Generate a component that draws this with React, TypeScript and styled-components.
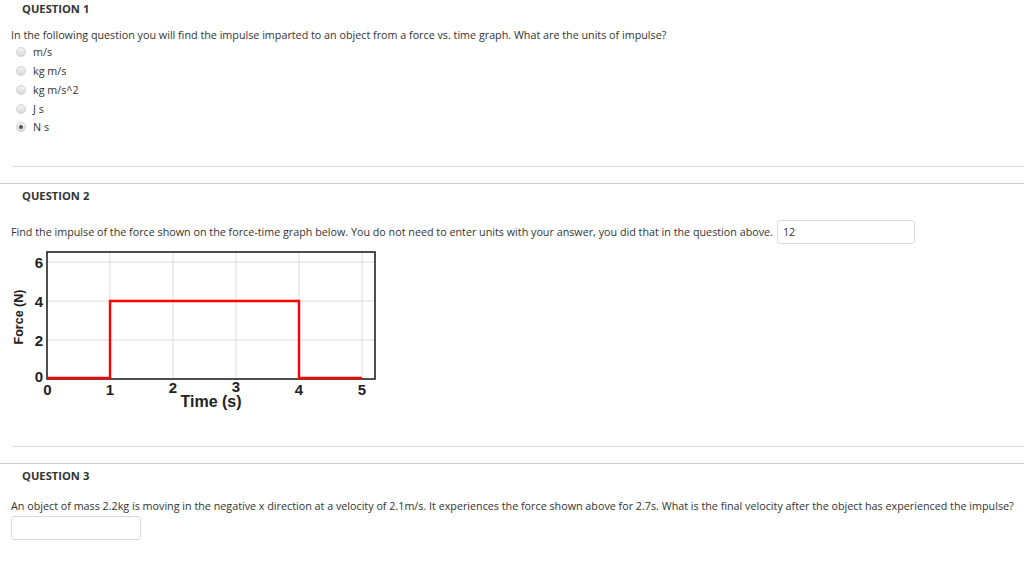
import React from "react";
import styled, { createGlobalStyle } from "styled-components";

const GlobalStyle = createGlobalStyle`
  html, body {
    margin: 0;
    padding: 0;
    background: #fff;
  }
  body {
    font-family: "Open Sans", "Liberation Sans", sans-serif;
    color: #333;
  }
`;

const options = ["m/s", "kg m/s", "kg m/s^2", "J s", "N s"];
const selected = 4;

export default function App() {
  return (
    <>
      <GlobalStyle />
      <Page>
        <Question>
          <Heading>QUESTION 1</Heading>
          <Body>
            <Prompt>
              In the following question you will find the impulse imparted to an object from a
              force vs. time graph. What are the units of impulse?
            </Prompt>
            <OptionList>
              {options.map((o, i) => (
                <OptionRow key={o}>
                  <Radio $checked={i === selected} />
                  <OptionLabel>{o}</OptionLabel>
                </OptionRow>
              ))}
            </OptionList>
            <Divider $gap={29} />
          </Body>
        </Question>

        <Question $separated>
          <Heading>QUESTION 2</Heading>
          <Body>
            <AnswerRow>
              <Prompt>
                Find the impulse of the force shown on the force-time graph below. You do not need
                to enter units with your answer, you did that in the question above.
              </Prompt>
              <Field $width={138} defaultValue="12" />
            </AnswerRow>
            <ForceGraph />
            <Divider $gap={29} />
          </Body>
        </Question>

        <Question $separated>
          <Heading>QUESTION 3</Heading>
          <Body>
            <Prompt $top={13}>
              An object of mass 2.2kg is moving in the negative x direction at a velocity of 2.1m/s.
              It experiences the force shown above for 2.7s. What is the final velocity after the
              object has experienced the impulse?
            </Prompt>
            <Field $width={130} $top={2} />
          </Body>
        </Question>
      </Page>
    </>
  );
}

function ForceGraph() {
  const xs = [47, 110, 173, 236, 299, 362];
  const ys = [379, 340, 301, 262];
  return (
    <Graph viewBox="11 245 380 172" width={380} height={172}>
      <rect x={11} y={245} width={380} height={172} fill="#fff" />
      {xs.slice(1).map((x) => (
        <line key={x} x1={x} y1={252} x2={x} y2={379} stroke="#dcdcdc" strokeWidth={1} />
      ))}
      {ys.slice(1).map((y) => (
        <line key={y} x1={47} y1={y} x2={375} y2={y} stroke="#dcdcdc" strokeWidth={1} />
      ))}
      <rect x={47} y={252} width={328} height={127} fill="none" stroke="#222" strokeWidth={1.6} />
      <polyline
        points="47,378 110,378 110,301 299,301 299,378 362,378"
        fill="none"
        stroke="#f00"
        strokeWidth={2.4}
      />
      <g fontFamily="'Liberation Sans', Arial, sans-serif" fontWeight="bold" fill="#222">
        <text x={39} y={262} fontSize={15} textAnchor="middle" dominantBaseline="central">6</text>
        <text x={39} y={301} fontSize={15} textAnchor="middle" dominantBaseline="central">4</text>
        <text x={39} y={340} fontSize={15} textAnchor="middle" dominantBaseline="central">2</text>
        <text x={39} y={376} fontSize={15} textAnchor="middle" dominantBaseline="central">0</text>
        <text x={47.5} y={389} fontSize={15} textAnchor="middle" dominantBaseline="central">0</text>
        <text x={110} y={389} fontSize={15} textAnchor="middle" dominantBaseline="central">1</text>
        <text x={173} y={387} fontSize={15} textAnchor="middle" dominantBaseline="central">2</text>
        <text x={236} y={386} fontSize={15} textAnchor="middle" dominantBaseline="central">3</text>
        <text x={299} y={389} fontSize={15} textAnchor="middle" dominantBaseline="central">4</text>
        <text x={362} y={389} fontSize={15} textAnchor="middle" dominantBaseline="central">5</text>
        <text x={211} y={401} fontSize={16} textAnchor="middle" dominantBaseline="central">
          Time (s)
        </text>
        <text
          x={19}
          y={317}
          fontSize={12.5}
          textAnchor="middle"
          dominantBaseline="central"
          transform="rotate(-90 19 317)"
        >
          Force (N)
        </text>
      </g>
    </Graph>
  );
}

const Page = styled.div`
  width: 1024px;
  min-height: 563px;
`;

const Question = styled.section<{ $separated?: boolean }>`
  border-top: ${(p) => (p.$separated ? "1px solid #cfcfcf" : "none")};
  margin-top: ${(p) => (p.$separated ? "16px" : "0")};
  padding-top: ${(p) => (p.$separated ? "3px" : "0")};
`;

const Heading = styled.h3`
  margin: 0;
  padding-left: 22px;
  font-size: 11.2px;
  line-height: 18px;
  font-weight: 700;
  color: #333;
`;

const Body = styled.div`
  padding-left: 11px;
`;

const Prompt = styled.p<{ $top?: number }>`
  margin: ${(p) => p.$top ?? 9}px 0 0;
  font-size: 10.75px;
  line-height: 16px;
  color: #333;
  white-space: nowrap;
`;

const OptionList = styled.div`
  display: flex;
  flex-direction: column;
`;

const OptionRow = styled.label`
  display: flex;
  align-items: center;
  height: 18.75px;
  padding-left: 5px;
`;

const Radio = styled.span<{ $checked?: boolean }>`
  position: relative;
  width: 10px;
  height: 10px;
  border-radius: 50%;
  box-sizing: border-box;
  border: 1px solid #d2d2d2;
  background: linear-gradient(#f4f4f4, #d9d9d9);
  margin-right: 7px;

  &::after {
    content: "";
    display: ${(p) => (p.$checked ? "block" : "none")};
    position: absolute;
    left: 2px;
    top: 2px;
    width: 4px;
    height: 4px;
    border-radius: 50%;
    background: #555;
  }
`;

const OptionLabel = styled.span`
  font-size: 10.75px;
  color: #333;
`;

const Divider = styled.hr<{ $gap: number }>`
  margin: ${(p) => p.$gap}px 0 0;
  border: none;
  border-top: 1px solid #dedede;
  height: 0;
`;

const AnswerRow = styled.div`
  display: flex;
  align-items: center;
  gap: 4px;
  margin-top: 15px;

  & > p {
    margin: 0;
  }
`;

const Field = styled.input<{ $width: number; $top?: number }>`
  display: block;
  box-sizing: border-box;
  width: ${(p) => p.$width}px;
  height: 24px;
  margin-top: ${(p) => p.$top ?? 0}px;
  padding: 0 5px;
  border: 1px solid #dcdcdc;
  border-radius: 3px;
  font-family: "Open Sans", "Liberation Sans", sans-serif;
  font-size: 10.75px;
  color: #333;
  outline: none;
`;

const Graph = styled.svg`
  display: block;
  margin-left: 0;
  margin-top: 1px;
`;
